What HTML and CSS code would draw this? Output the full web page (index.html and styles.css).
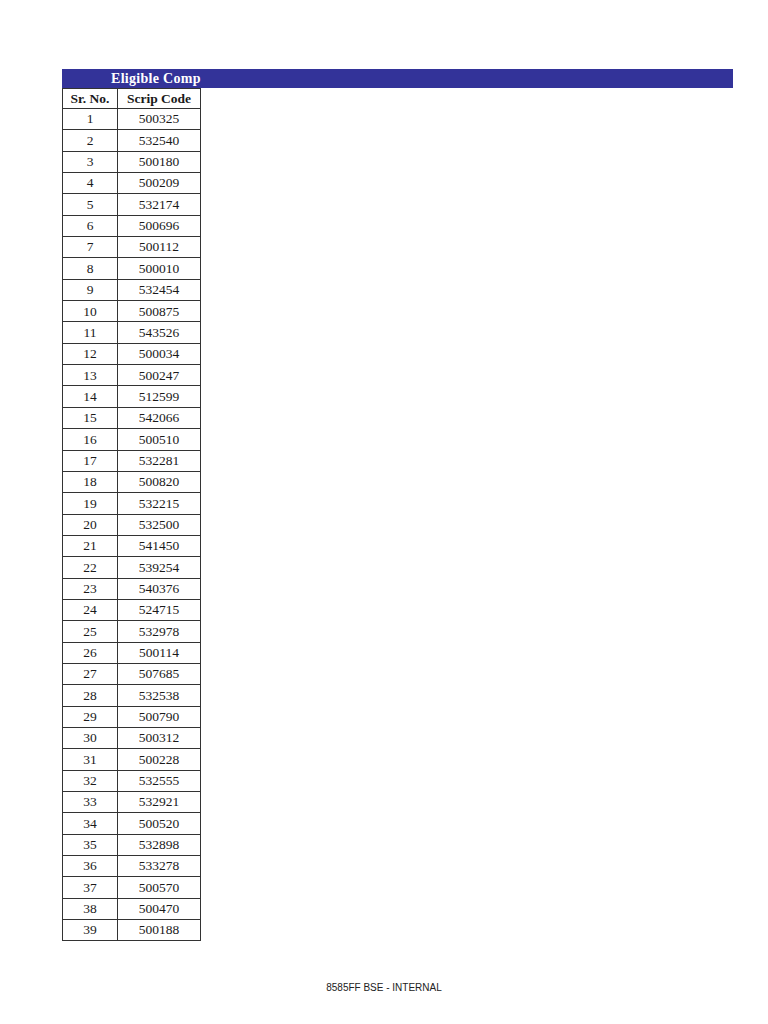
FILE: index.html
```html
<!DOCTYPE html>
<html>
<head>
<meta charset="utf-8">
<link rel="stylesheet" href="styles.css">
</head>
<body>
<div class="page">
  <div class="banner"><span class="title">Eligible Comp</span></div>
  <table class="grid">
    <thead>
      <tr><th class="c1">Sr. No.</th><th class="c2">Scrip Code</th></tr>
    </thead>
    <tbody id="rows">
      <tr><td>1</td><td>500325</td></tr>
      <tr><td>2</td><td>532540</td></tr>
      <tr><td>3</td><td>500180</td></tr>
      <tr><td>4</td><td>500209</td></tr>
      <tr><td>5</td><td>532174</td></tr>
      <tr><td>6</td><td>500696</td></tr>
      <tr><td>7</td><td>500112</td></tr>
      <tr><td>8</td><td>500010</td></tr>
      <tr><td>9</td><td>532454</td></tr>
      <tr><td>10</td><td>500875</td></tr>
      <tr><td>11</td><td>543526</td></tr>
      <tr><td>12</td><td>500034</td></tr>
      <tr><td>13</td><td>500247</td></tr>
      <tr><td>14</td><td>512599</td></tr>
      <tr><td>15</td><td>542066</td></tr>
      <tr><td>16</td><td>500510</td></tr>
      <tr><td>17</td><td>532281</td></tr>
      <tr><td>18</td><td>500820</td></tr>
      <tr><td>19</td><td>532215</td></tr>
      <tr><td>20</td><td>532500</td></tr>
      <tr><td>21</td><td>541450</td></tr>
      <tr><td>22</td><td>539254</td></tr>
      <tr><td>23</td><td>540376</td></tr>
      <tr><td>24</td><td>524715</td></tr>
      <tr><td>25</td><td>532978</td></tr>
      <tr><td>26</td><td>500114</td></tr>
      <tr><td>27</td><td>507685</td></tr>
      <tr><td>28</td><td>532538</td></tr>
      <tr><td>29</td><td>500790</td></tr>
      <tr><td>30</td><td>500312</td></tr>
      <tr><td>31</td><td>500228</td></tr>
      <tr><td>32</td><td>532555</td></tr>
      <tr><td>33</td><td>532921</td></tr>
      <tr><td>34</td><td>500520</td></tr>
      <tr><td>35</td><td>532898</td></tr>
      <tr><td>36</td><td>533278</td></tr>
      <tr><td>37</td><td>500570</td></tr>
      <tr><td>38</td><td>500470</td></tr>
      <tr><td>39</td><td>500188</td></tr>
    </tbody>
  </table>
  <div class="footer">8585FF BSE - INTERNAL</div>
</div>
</body>
</html>
```
FILE: styles.css
```css
html, body {
  margin: 0;
  padding: 0;
  background: #ffffff;
}
.page {
  width: 768px;
  height: 1024px;
  padding-top: 69px;
  padding-left: 62px;
  box-sizing: border-box;
  font-family: "Liberation Serif", "DejaVu Serif", serif;
  color: #1a1a1a;
}
.banner {
  width: 671px;
  height: 19px;
  background: #333399;
  box-sizing: border-box;
  display: flex;
  align-items: center;
}
.title {
  color: #ffffff;
  font-weight: bold;
  font-size: 14px;
  padding-left: 49px;
  letter-spacing: 0.3px;
}
.grid {
  border-collapse: collapse;
  font-size: 13.5px;
}
.grid th, .grid td {
  border: 1px solid #333;
  text-align: center;
  padding: 0;
  height: 20.35px;
  line-height: 1;
}
.grid th {
  font-weight: bold;
  height: 19px;
}
.c1 { width: 54px; }
.c2 { width: 82px; }
.footer {
  margin-top: 41px;
  margin-left: -62px;
  width: 768px;
  text-align: center;
  font-family: "Liberation Sans", Arial, sans-serif;
  font-size: 10px;
  color: #222;
}
```
